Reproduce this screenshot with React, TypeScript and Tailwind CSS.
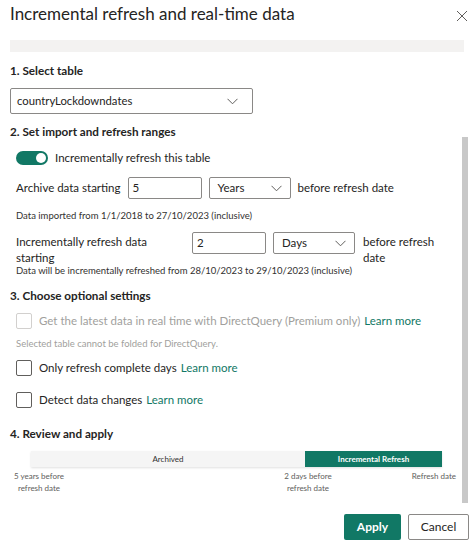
import React, { useState } from "react";

function Chevron() {
  return (
    <svg width="11" height="7" viewBox="0 0 11 7" fill="none" className="shrink-0">
      <polyline points="0.5,0.8 5.5,5.8 10.5,0.8" stroke="#605e5c" strokeWidth="1" />
    </svg>
  );
}

function Select({ value, className }: { value: string; className: string }) {
  return (
    <div className={`flex items-center justify-between border border-[#8a8886] rounded-[2px] bg-white ${className}`}>
      <span>{value}</span>
      <Chevron />
    </div>
  );
}

function Checkbox({ label, disabled, link }: { label: string; disabled?: boolean; link?: boolean }) {
  const [checked, setChecked] = useState(false);
  return (
    <div className="flex items-center h-[20px]">
      <button
        disabled={disabled}
        onClick={() => setChecked(!checked)}
        className={`w-[16px] h-[16px] ml-[6px] shrink-0 rounded-[2px] border ${disabled ? "border-[#d2d0ce]" : "border-[#605e5c]"} ${checked ? "bg-[#117865]" : "bg-white"}`}
      />
      <span className={`ml-[7px] text-[11.5px] whitespace-nowrap ${disabled ? "text-[#a19f9d]" : "text-[#252423]"}`}>{label}</span>
      {link && <a className="ml-[4px] text-[11.5px] whitespace-nowrap text-[#117865]">Learn more</a>}
    </div>
  );
}

export default function App() {
  const [enabled, setEnabled] = useState(true);

  return (
    <div className="w-[474px] h-[543px] bg-white overflow-hidden text-[#252423] font-['Lato',sans-serif]">
      {/* Header */}
      <div className="h-[30px] flex items-start justify-between pl-[10px] pr-[6px]">
        <h2 className="text-[17px] leading-[28px]">Incremental refresh and real-time data</h2>
        <svg width="12" height="12" viewBox="0 0 12 12" className="mt-[10px]">
          <path d="M1 1L11 11M11 1L1 11" stroke="#605e5c" strokeWidth="1" />
        </svg>
      </div>
      <div className="mx-[10px] mt-[10px] h-[12px] bg-[#f3f2f1]" />

      {/* Body */}
      <div className="h-[455px] flex">
        <div className="flex-1 flex flex-col pl-[10px]">
          <div className="mt-[9px] text-[11.7px] leading-[18px] font-bold">1. Select table</div>
          <Select value="countryLockdowndates" className="mt-[9px] w-[243px] h-[26px] pl-[6px] pr-[14px] text-[11.3px]" />

          <div className="mt-[8px] text-[11.7px] leading-[18px] font-bold">2. Set import and refresh ranges</div>

          <div className="mt-[8px] flex items-center h-[20px] pl-[6px]">
            <button
              onClick={() => setEnabled(!enabled)}
              className={`w-[32px] h-[14px] rounded-full flex items-center px-[2px] ${enabled ? "bg-[#117865] justify-end" : "bg-[#c8c6c4] justify-start"}`}
            >
              <span className="w-[10px] h-[10px] rounded-full bg-white" />
            </button>
            <span className="ml-[7px] text-[11.5px]">Incrementally refresh this table</span>
          </div>

          <div className="mt-[9px] flex items-center h-[22px] pl-[6px] text-[11.5px]">
            <span>Archive data starting</span>
            <div className="ml-[7px] w-[74px] h-[22px] border border-[#8a8886] rounded-[2px] pl-[4px] flex items-center">5</div>
            <Select value="Years" className="ml-[7px] w-[82px] h-[22px] pl-[8px] pr-[8px]" />
            <span className="ml-[7px]">before refresh date</span>
          </div>

          <div className="mt-[10px] pl-[6px] text-[9.5px] leading-[14px] text-[#323130]">
            Data imported from 1/1/2018 to 27/10/2023 (inclusive)
          </div>

          <div className="mt-[9px] flex items-start pl-[6px] text-[11.5px]">
            <div className="w-[176px] pr-[40px] pt-[2px] leading-[16px]">Incrementally refresh data starting</div>
            <div className="w-[74px] h-[22px] border border-[#8a8886] rounded-[2px] pl-[4px] flex items-center">2</div>
            <Select value="Days" className="ml-[7px] w-[82px] h-[22px] pl-[8px] pr-[8px]" />
            <span className="ml-[8px] w-[80px] pt-[2px] leading-[16px]">before refresh date</span>
          </div>
          <div className="pl-[6px] text-[9.5px] leading-[10px] text-[#323130]">
            Data will be incrementally refreshed from 28/10/2023 to 29/10/2023 (inclusive)
          </div>

          <div className="mt-[10px] text-[11.7px] leading-[18px] font-bold">3. Choose optional settings</div>
          <div className="mt-[7px]">
            <Checkbox label="Get the latest data in real time with DirectQuery (Premium only)" disabled link />
          </div>
          <div className="mt-[6px] pl-[6px] text-[9.5px] leading-[14px] text-[#a19f9d]">
            Selected table cannot be folded for DirectQuery.
          </div>
          <div className="mt-[7px]">
            <Checkbox label="Only refresh complete days" link />
          </div>
          <div className="mt-[12px]">
            <Checkbox label="Detect data changes" link />
          </div>

          <div className="mt-[14px] text-[11.7px] leading-[18px] font-bold">4. Review and apply</div>
          <div className="mt-[9px] ml-[21px] w-[411px] h-[16px] flex text-[8px] shadow-[0_1px_2px_rgba(0,0,0,0.12)]">
            <div className="w-[274px] bg-[#f5f5f5] text-[#323130] flex items-center justify-center">Archived</div>
            <div className="flex-1 bg-[#117865] text-white font-bold flex items-center justify-center">Incremental Refresh</div>
          </div>
          <div className="mt-[3px] flex text-[8px] leading-[12px] text-[#605e5c]">
            <div className="w-[58px] text-center">5 years before<br />refresh date</div>
            <div className="ml-[211px] w-[58px] text-center">2 days before<br />refresh date</div>
            <div className="flex-1 text-right pr-[2px]">Refresh date</div>
          </div>
        </div>

        {/* Scrollbar */}
        <div className="w-[6px] ml-[4px] mr-[6px]">
          <div className="mt-[85px] h-[366px] bg-[#c8c8c8]" />
        </div>
      </div>

      {/* Footer */}
      <div className="mt-[7px] flex justify-end gap-[7px] pr-[5px]">
        <button className="w-[57px] h-[26px] bg-[#117865] text-white text-[12px] font-bold rounded-[2px]">Apply</button>
        <button className="w-[61px] h-[26px] border border-[#8a8886] text-[12px] rounded-[2px] bg-white">Cancel</button>
      </div>
    </div>
  );
}
